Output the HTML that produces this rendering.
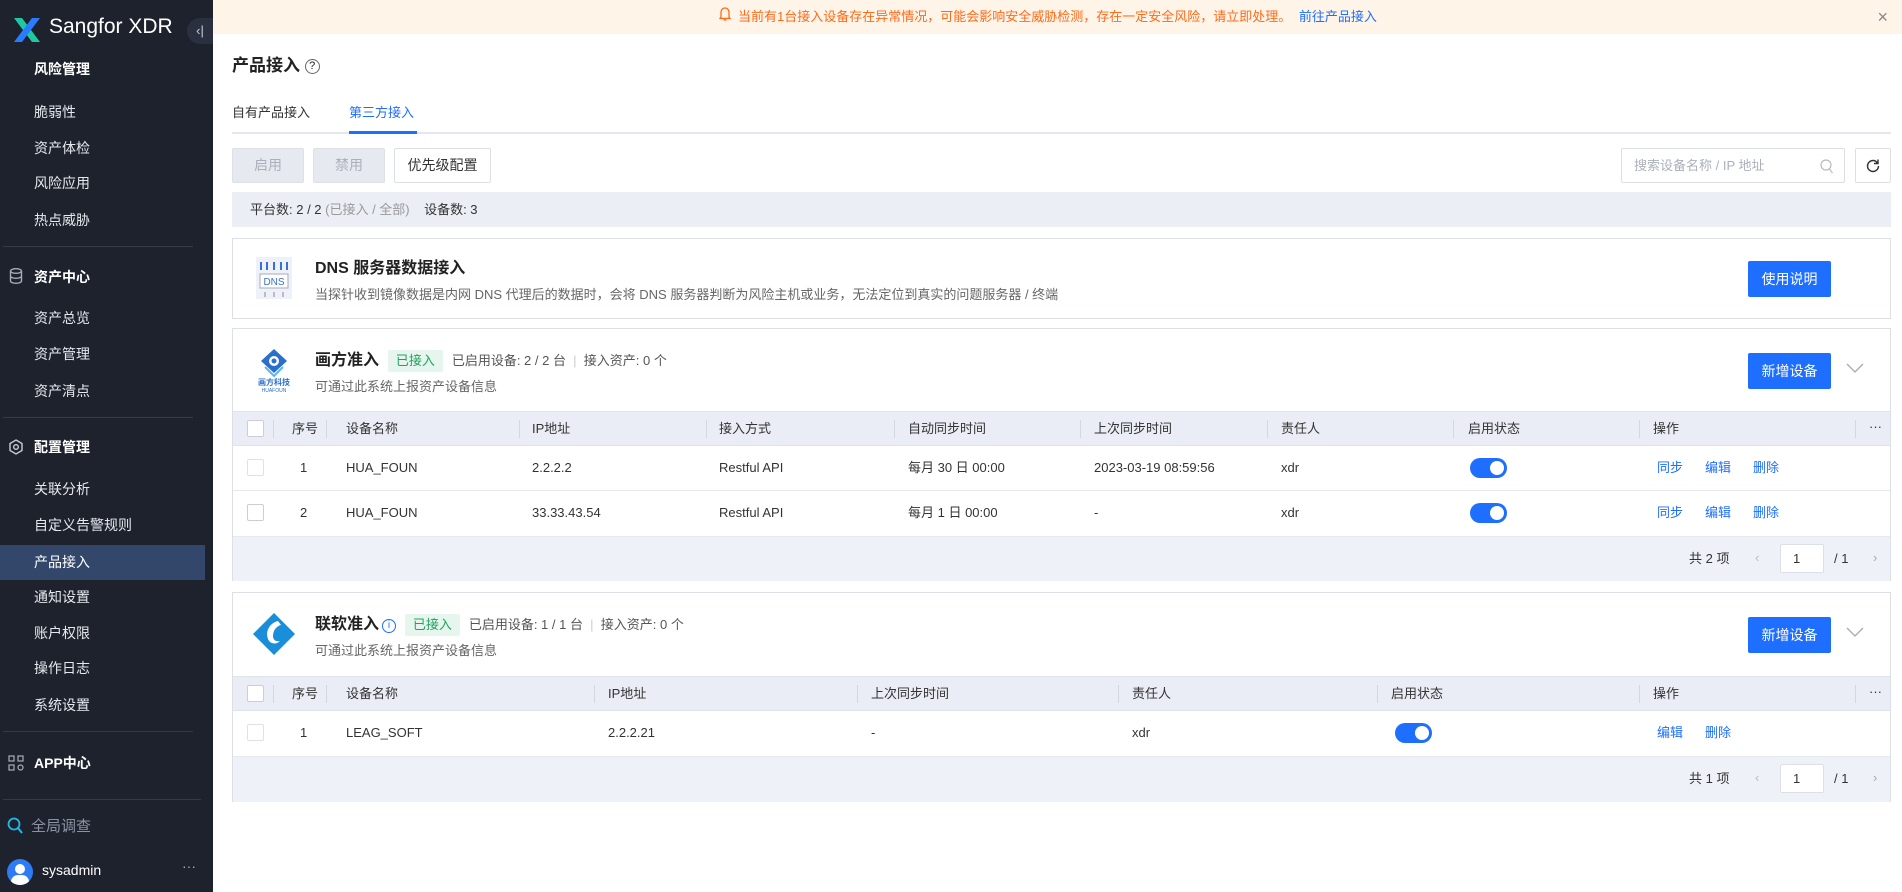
<!DOCTYPE html>
<html><head><meta charset="utf-8"><style>
*{box-sizing:border-box;margin:0;padding:0}
body{width:1902px;height:892px;overflow:hidden;background:#fff;font-family:"Liberation Sans","Noto Sans CJK SC",sans-serif;font-size:14px;color:#333;position:relative}
.sb{position:absolute;left:0;top:0;width:213px;height:892px;background:#1e222d;color:#e6e8ee}
.sb .it{position:absolute;left:34px;font-size:14px;line-height:20px}
.sb .grp{position:absolute;left:34px;font-size:14px;font-weight:bold;line-height:20px;color:#fff}
.sb .dv{position:absolute;left:3px;width:190px;height:1px;background:#353a48}
.ab{position:absolute;left:232px;}
.banner{position:absolute;left:213px;top:0;right:0;height:34px;background:#fff4e8;font-size:13px;line-height:30px;color:#ff6a1a}
.btn{position:absolute;height:35px;border:1px solid #dcdfe6;border-radius:2px;text-align:center;line-height:33px;font-size:14px}
.card{position:absolute;left:232px;width:1659px;border:1px solid #dcdfe6;background:#fff}
.pb{position:absolute;background:#1e6fff;color:#fff;border-radius:2px;text-align:center;font-size:14px;width:83px;height:36px;line-height:36px}
.th{position:absolute;left:0;right:0;background:#eaedf5;border-top:1px solid #dfe3ec;border-bottom:1px solid #dfe3ec}
.row{position:absolute;left:0;right:0;border-bottom:1px solid #e6e9ef}
.c{position:absolute;font-size:13px;color:#333;white-space:nowrap;line-height:20px;height:20px}
.cb{position:absolute;width:17px;height:17px;border:1px solid #ccd;border-radius:2px;background:#fff}
.sep{position:absolute;width:1px;height:18px;background:#d3d7e0}
.tg{position:absolute;width:37px;height:20px;border-radius:10px;background:#1e6fff}
.tg:after{content:"";position:absolute;right:3px;top:3px;width:14px;height:14px;border-radius:7px;background:#fff}
.lk{color:#1e6fff}
.ft{position:absolute;left:0;right:0;background:#eef1f7}
.tag{display:inline-block;background:#e6f6ee;color:#21a35e;font-size:13px;padding:0 8px;line-height:22px;border-radius:2px}
.chev{position:absolute;left:1613px;top:34px}
</style></head><body>
<div class="sb">
  <svg style="position:absolute;left:13px;top:17px" width="28" height="26" viewBox="0 0 28 26"><path d="M1 1 L9 1 L27 25 L19 25Z" fill="#1ec8a0"/><path d="M27 1 L19 1 L1 25 L9 25Z" fill="#2a7bff"/></svg>
  <div style="position:absolute;left:49px;top:15px;font-size:21px;color:#fff">Sangfor XDR</div>
  <div style="position:absolute;left:187px;top:18px;width:26px;height:26px;border-radius:13px 0 0 13px;background:#2b3040;color:#ccd;font-size:13px;text-align:center;line-height:26px">&lsaquo;|</div>
  <div class="grp" style="top:59px">风险管理</div>
  <div class="it" style="top:102px">脆弱性</div>
  <div class="it" style="top:138px">资产体检</div>
  <div class="it" style="top:173px">风险应用</div>
  <div class="it" style="top:210px">热点威胁</div>
  <div class="dv" style="top:246px"></div>
  <svg style="position:absolute;left:9px;top:268px" width="14" height="16" viewBox="0 0 14 16"><ellipse cx="7" cy="3" rx="5.5" ry="2.3" fill="none" stroke="#aab" stroke-width="1.4"/><path d="M1.5 3v10c0 1.3 2.5 2.3 5.5 2.3s5.5-1 5.5-2.3V3M1.5 8c0 1.3 2.5 2.3 5.5 2.3s5.5-1 5.5-2.3" fill="none" stroke="#aab" stroke-width="1.4"/></svg>
  <div class="grp" style="top:267px">资产中心</div>
  <div class="it" style="top:308px">资产总览</div>
  <div class="it" style="top:344px">资产管理</div>
  <div class="it" style="top:381px">资产清点</div>
  <div class="dv" style="top:417px"></div>
  <svg style="position:absolute;left:8px;top:439px" width="16" height="16" viewBox="0 0 16 16"><path d="M8 1l6 3.5v7L8 15l-6-3.5v-7z" fill="none" stroke="#ccd" stroke-width="1.4"/><circle cx="8" cy="8" r="2.3" fill="none" stroke="#ccd" stroke-width="1.4"/></svg>
  <div class="grp" style="top:437px">配置管理</div>
  <div class="it" style="top:479px">关联分析</div>
  <div class="it" style="top:515px">自定义告警规则</div>
  <div style="position:absolute;left:0;top:545px;width:205px;height:35px;background:#33476b"></div>
  <div class="it" style="top:552px;color:#fff">产品接入</div>
  <div class="it" style="top:587px">通知设置</div>
  <div class="it" style="top:623px">账户权限</div>
  <div class="it" style="top:658px">操作日志</div>
  <div class="it" style="top:695px">系统设置</div>
  <div class="dv" style="top:731px"></div>
  <svg style="position:absolute;left:8px;top:755px" width="16" height="16" viewBox="0 0 16 16" fill="none" stroke="#aab" stroke-width="1.2"><rect x="1" y="1" width="5" height="5"/><rect x="10" y="1" width="5" height="5"/><rect x="1" y="10" width="5" height="5"/><circle cx="12.5" cy="12.5" r="2.5"/></svg>
  <div class="grp" style="top:753px">APP中心</div>
  <div class="dv" style="top:799px;width:198px"></div>
  <svg style="position:absolute;left:7px;top:817px" width="16" height="17" viewBox="0 0 16 17"><circle cx="7" cy="7" r="5.5" fill="none" stroke="#22b8e8" stroke-width="1.8"/><path d="M11 11l4 5" stroke="#22b8e8" stroke-width="2"/></svg>
  <div style="position:absolute;left:31px;top:815px;font-size:15px;color:#8c92a3">全局调查</div>
  <div style="position:absolute;left:7px;top:859px;width:26px;height:26px;border-radius:13px;background:#2d7cf6;overflow:hidden"><div style="position:absolute;left:8px;top:5px;width:10px;height:10px;border-radius:5px;background:#fff"></div><div style="position:absolute;left:4px;top:16px;width:18px;height:14px;border-radius:9px;background:#fff"></div></div>
  <div style="position:absolute;left:42px;top:862px;font-size:14px;color:#fff">sysadmin</div>
  <div style="position:absolute;left:182px;top:858px;font-size:14px;color:#aab">···</div>
</div>
<div class="banner">
  <svg style="position:absolute;left:506px;top:7px" width="12" height="15" viewBox="0 0 12 15"><path d="M6 1c-2.5 0-4 2-4 4.5V10L1 11.5h10L10 10V5.5C10 3 8.5 1 6 1zM4.5 13h3" fill="none" stroke="#ff6a1a" stroke-width="1.3"/></svg>
  <span style="position:absolute;left:525px;top:2px;white-space:nowrap">当前有1台接入设备存在异常情况，可能会影响安全威胁检测，存在一定安全风险，请立即处理。 <span class="lk" style="margin-left:4px">前往产品接入</span></span>
  <div style="position:absolute;right:14px;top:2px;font-size:18px;color:#888">×</div>
</div>
<div class="ab" style="top:51px;font-size:17px;font-weight:bold;color:#222">产品接入 <span style="display:inline-block;width:15px;height:15px;border:1px solid #666;border-radius:8px;font-size:11px;line-height:13px;text-align:center;font-weight:normal;vertical-align:2px">?</span></div>
<div class="ab" style="top:102px;font-size:13px">自有产品接入</div>
<div class="ab" style="left:349px;top:102px;font-size:13px;color:#1e6fff">第三方接入</div>
<div style="position:absolute;left:232px;top:132px;width:1659px;height:2px;background:#e4e7ed"></div>
<div style="position:absolute;left:349px;top:131px;width:68px;height:3px;background:#1e6fff"></div>
<div class="btn" style="left:232px;top:148px;width:72px;background:#e6e9ef;color:#aab0bb;border-color:#dde0e6">启用</div>
<div class="btn" style="left:313px;top:148px;width:72px;background:#e6e9ef;color:#aab0bb;border-color:#dde0e6">禁用</div>
<div class="btn" style="left:394px;top:148px;width:97px;color:#333">优先级配置</div>
<div class="btn" style="left:1621px;top:148px;width:224px;text-align:left;padding-left:12px;color:#aab0bb;font-size:13px">搜索设备名称 / IP 地址<svg style="position:absolute;right:10px;top:10px" width="14" height="15" viewBox="0 0 14 15"><circle cx="6" cy="6" r="5" fill="none" stroke="#bbb" stroke-width="1.2"/><path d="M9.5 10l3 4" stroke="#bbb" stroke-width="1.2"/></svg></div>
<div class="btn" style="left:1855px;top:148px;width:36px;"><svg style="margin-top:9px" width="16" height="16" viewBox="0 0 16 16"><path d="M13.5 8A5.5 5.5 0 1 1 8 2.5c2 0 3.5 1 4.5 2.5M13 1.5v4h-4" fill="none" stroke="#333" stroke-width="1.4"/></svg></div>
<div style="position:absolute;left:232px;top:192px;width:1659px;height:35px;background:#ebeef5;font-size:13px;line-height:35px;padding-left:18px">平台数: 2 / 2 <span style="color:#999">(已接入 / 全部)</span>&nbsp;&nbsp;&nbsp; 设备数: 3</div>

<div class="card" style="top:238px;height:81px">
  <svg style="position:absolute;left:22px;top:17px" width="38" height="44" viewBox="0 0 38 44"><rect x="1" y="1" width="36" height="42" fill="#eef1f7"/><path d="M6 6v8M12 6v8M19 6v8M26 6v8M32 6v8" stroke="#3b6fd8" stroke-width="2"/><rect x="5" y="18" width="28" height="14" fill="#fff" stroke="#aab" /><text x="19" y="29" font-size="10" text-anchor="middle" fill="#3b6fd8" font-family="Liberation Sans">DNS</text><path d="M10 36v5M19 36v5M28 36v5" stroke="#bbc" stroke-width="2"/></svg>
  <div style="position:absolute;left:82px;top:15px;font-size:16px;font-weight:bold;color:#222">DNS 服务器数据接入</div>
  <div style="position:absolute;left:82px;top:45px;font-size:13px;color:#666">当探针收到镜像数据是内网 DNS 代理后的数据时，会将 DNS 服务器判断为风险主机或业务，无法定位到真实的问题服务器 / 终端</div>
  <div class="pb" style="left:1515px;top:22px">使用说明</div>
</div>

<div class="card" style="top:328px;height:253px">
  <svg style="position:absolute;left:18px;top:18px" width="46" height="46" viewBox="0 0 46 46"><path d="M23 2l13 12-13 12-13-12z" fill="#2a6fd0"/><circle cx="23" cy="14" r="5" fill="#fff"/><circle cx="23" cy="14" r="2.5" fill="#2a6fd0"/><path d="M14 20l9 9 9-9" fill="none" stroke="#58b8e8" stroke-width="2"/><text x="23" y="38" font-size="8" text-anchor="middle" fill="#2a6fd0" font-weight="bold" font-family="Noto Sans CJK SC">画方科技</text><text x="23" y="45" font-size="5" text-anchor="middle" fill="#2a6fd0" font-family="Liberation Sans">HUAFOUN</text></svg>
  <div style="position:absolute;left:82px;top:17px;font-size:16px;white-space:nowrap"><b style="color:#222">画方准入</b>&nbsp;&nbsp;<span class="tag">已接入</span>&nbsp;&nbsp;<span style="font-size:13px;color:#555">已启用设备: 2 / 2 台 &nbsp;<span style="color:#ccc">|</span>&nbsp; 接入资产: 0 个</span></div>
  <div style="position:absolute;left:82px;top:47px;font-size:13px;color:#666">可通过此系统上报资产设备信息</div>
  <div class="pb" style="left:1515px;top:24px">新增设备</div>
  <svg class="chev" width="18" height="10" viewBox="0 0 18 10"><path d="M1 1l8 8 8-8" fill="none" stroke="#aaa" stroke-width="1.3"/></svg>
  <div class="th" style="top:82px;height:35px">
    <div class="cb" style="left:14px;top:8px"></div><div class="sep" style="left:40px;top:8px"></div>
    <div class="c" style="left:59px;top:7px">序号</div><div class="sep" style="left:93px;top:8px"></div>
    <div class="c" style="left:113px;top:7px">设备名称</div><div class="sep" style="left:286px;top:8px"></div>
    <div class="c" style="left:299px;top:7px">IP地址</div><div class="sep" style="left:473px;top:8px"></div>
    <div class="c" style="left:486px;top:7px">接入方式</div><div class="sep" style="left:661px;top:8px"></div>
    <div class="c" style="left:675px;top:7px">自动同步时间</div><div class="sep" style="left:847px;top:8px"></div>
    <div class="c" style="left:861px;top:7px">上次同步时间</div><div class="sep" style="left:1034px;top:8px"></div>
    <div class="c" style="left:1048px;top:7px">责任人</div><div class="sep" style="left:1220px;top:8px"></div>
    <div class="c" style="left:1235px;top:7px">启用状态</div><div class="sep" style="left:1406px;top:8px"></div>
    <div class="c" style="left:1420px;top:7px">操作</div><div class="sep" style="left:1622px;top:8px"></div>
    <div class="c" style="left:1636px;top:5px">···</div>
  </div>
  <div class="row" style="top:117px;height:45px">
    <div class="cb" style="left:14px;top:13px;opacity:.6"></div>
    <div class="c" style="left:67px;top:12px">1</div><div class="c" style="left:113px;top:12px">HUA_FOUN</div><div class="c" style="left:299px;top:12px">2.2.2.2</div><div class="c" style="left:486px;top:12px">Restful API</div><div class="c" style="left:675px;top:12px">每月 30 日 00:00</div><div class="c" style="left:861px;top:12px">2023-03-19 08:59:56</div><div class="c" style="left:1048px;top:12px">xdr</div>
    <div class="tg" style="left:1237px;top:12px"></div>
    <div class="c lk" style="left:1424px;top:12px">同步</div><div class="c lk" style="left:1472px;top:12px">编辑</div><div class="c lk" style="left:1520px;top:12px">删除</div>
  </div>
  <div class="row" style="top:162px;height:46px">
    <div class="cb" style="left:14px;top:13px"></div>
    <div class="c" style="left:67px;top:12px">2</div><div class="c" style="left:113px;top:12px">HUA_FOUN</div><div class="c" style="left:299px;top:12px">33.33.43.54</div><div class="c" style="left:486px;top:12px">Restful API</div><div class="c" style="left:675px;top:12px">每月 1 日 00:00</div><div class="c" style="left:861px;top:12px">-</div><div class="c" style="left:1048px;top:12px">xdr</div>
    <div class="tg" style="left:1237px;top:12px"></div>
    <div class="c lk" style="left:1424px;top:12px">同步</div><div class="c lk" style="left:1472px;top:12px">编辑</div><div class="c lk" style="left:1520px;top:12px">删除</div>
  </div>
  <div class="ft" style="top:208px;height:44px">
    <div class="c" style="left:1456px;top:12px">共 2 项</div>
    <div class="c" style="left:1522px;top:11px;color:#bbb">‹</div>
    <div style="position:absolute;left:1547px;top:7px;width:44px;height:29px;background:#fff;border:1px solid #dcdfe6;border-radius:2px;font-size:13px;line-height:27px;padding-left:12px">1</div>
    <div class="c" style="left:1601px;top:12px">/ 1</div>
    <div class="c" style="left:1640px;top:11px;color:#aaa">›</div>
  </div>
</div>

<div class="card" style="top:592px;height:210px">
  <svg style="position:absolute;left:18px;top:18px" width="46" height="46" viewBox="0 0 46 46"><path d="M23 2l21 21-21 21L2 23z" fill="#1a8ed8"/><path d="M27 10c-8 2-13 10-10 18 2 5 8 6 12 2-4 1-7-1-7-5 0-6 4-10 8-11z" fill="#fff"/></svg>
  <div style="position:absolute;left:82px;top:17px;font-size:16px;white-space:nowrap"><b style="color:#222">联软准入</b><span style="display:inline-block;width:14px;height:14px;border:1px solid #1e6fff;border-radius:7px;color:#1e6fff;font-size:10px;line-height:12px;text-align:center;margin-left:3px;vertical-align:1px">i</span>&nbsp;&nbsp;<span class="tag">已接入</span>&nbsp;&nbsp;<span style="font-size:13px;color:#555">已启用设备: 1 / 1 台 &nbsp;<span style="color:#ccc">|</span>&nbsp; 接入资产: 0 个</span></div>
  <div style="position:absolute;left:82px;top:47px;font-size:13px;color:#666">可通过此系统上报资产设备信息</div>
  <div class="pb" style="left:1515px;top:24px">新增设备</div>
  <svg class="chev" width="18" height="10" viewBox="0 0 18 10"><path d="M1 1l8 8 8-8" fill="none" stroke="#aaa" stroke-width="1.3"/></svg>
  <div class="th" style="top:83px;height:35px">
    <div class="cb" style="left:14px;top:8px"></div><div class="sep" style="left:40px;top:8px"></div>
    <div class="c" style="left:59px;top:7px">序号</div><div class="sep" style="left:93px;top:8px"></div>
    <div class="c" style="left:113px;top:7px">设备名称</div><div class="sep" style="left:361px;top:8px"></div>
    <div class="c" style="left:375px;top:7px">IP地址</div><div class="sep" style="left:624px;top:8px"></div>
    <div class="c" style="left:638px;top:7px">上次同步时间</div><div class="sep" style="left:885px;top:8px"></div>
    <div class="c" style="left:899px;top:7px">责任人</div><div class="sep" style="left:1144px;top:8px"></div>
    <div class="c" style="left:1158px;top:7px">启用状态</div><div class="sep" style="left:1406px;top:8px"></div>
    <div class="c" style="left:1420px;top:7px">操作</div><div class="sep" style="left:1622px;top:8px"></div>
    <div class="c" style="left:1636px;top:5px">···</div>
  </div>
  <div class="row" style="top:118px;height:46px">
    <div class="cb" style="left:14px;top:13px;opacity:.6"></div>
    <div class="c" style="left:67px;top:12px">1</div><div class="c" style="left:113px;top:12px">LEAG_SOFT</div><div class="c" style="left:375px;top:12px">2.2.2.21</div><div class="c" style="left:638px;top:12px">-</div><div class="c" style="left:899px;top:12px">xdr</div>
    <div class="tg" style="left:1162px;top:12px"></div>
    <div class="c lk" style="left:1424px;top:12px">编辑</div><div class="c lk" style="left:1472px;top:12px">删除</div>
  </div>
  <div class="ft" style="top:164px;height:45px">
    <div class="c" style="left:1456px;top:12px">共 1 项</div>
    <div class="c" style="left:1522px;top:11px;color:#bbb">‹</div>
    <div style="position:absolute;left:1547px;top:7px;width:44px;height:29px;background:#fff;border:1px solid #dcdfe6;border-radius:2px;font-size:13px;line-height:27px;padding-left:12px">1</div>
    <div class="c" style="left:1601px;top:12px">/ 1</div>
    <div class="c" style="left:1640px;top:11px;color:#aaa">›</div>
  </div>
</div>
</body></html>
